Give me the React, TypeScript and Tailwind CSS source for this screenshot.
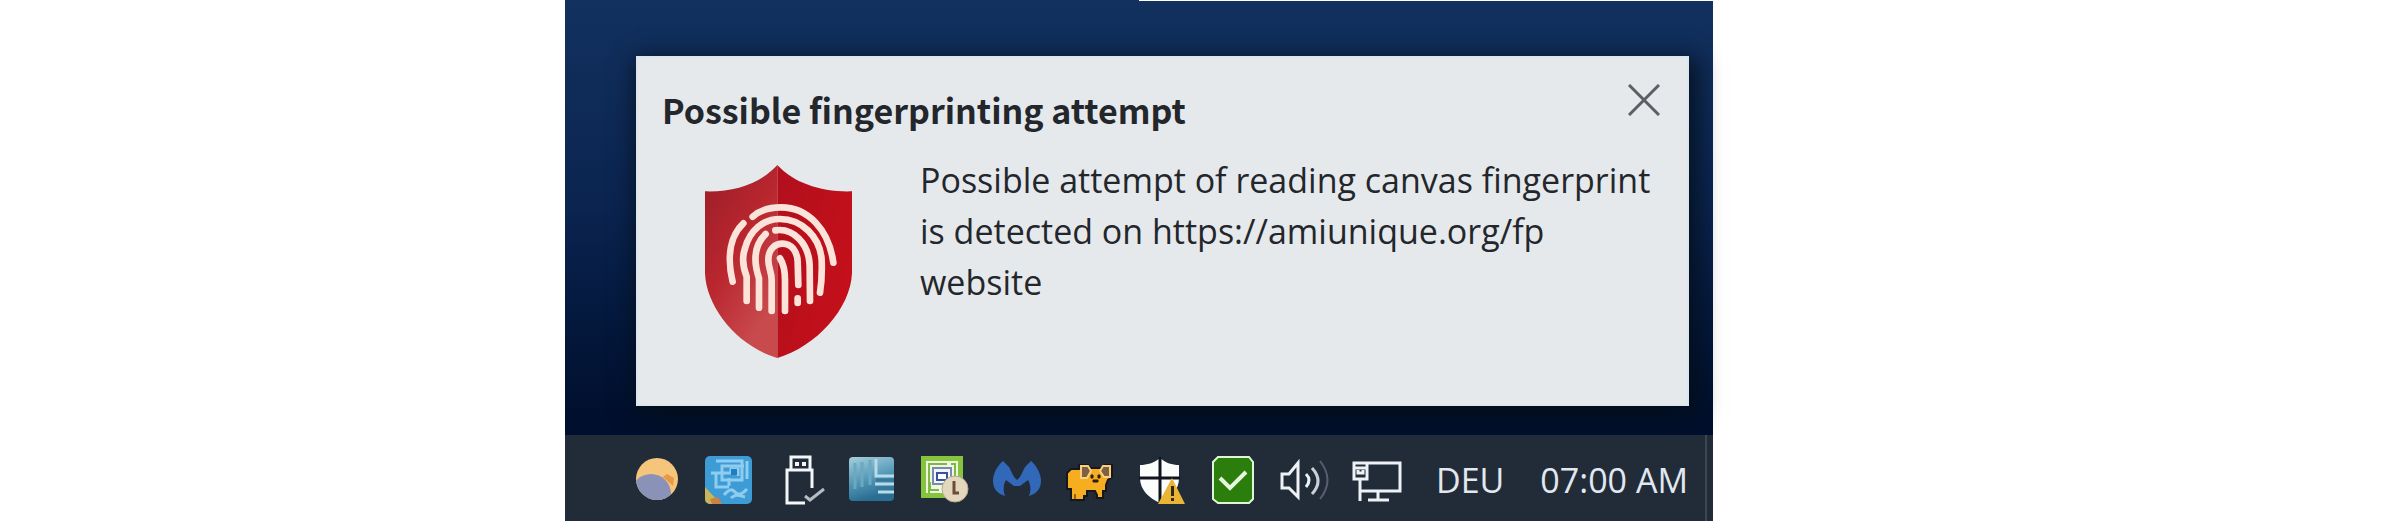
import React, { useState } from 'react';

const ShieldLogo: React.FC = () => (
  <svg viewBox="0 0 441 579" className="w-[147px] h-[193px] shrink-0" role="img" aria-label="Fingerprint shield">
    <defs>
      <linearGradient id="shield-left" x1="0" y1="0.2" x2="0.5" y2="1">
        <stop offset="0" stopColor="#a3202a" />
        <stop offset="0.45" stopColor="#b9262e" />
        <stop offset="1" stopColor="#c84a4d" />
      </linearGradient>
      <linearGradient id="shield-right" x1="0" y1="0" x2="1" y2="0.6">
        <stop offset="0" stopColor="#b10f1d" />
        <stop offset="1" stopColor="#c4101a" />
      </linearGradient>
    </defs>
    <path d="M217 0C168 54 90 82 0 79V325C4 430 100 545 217 579Z" fill="url(#shield-left)" />
    <path d="M217 0C266 54 350 82 441 79V325C437 430 334 545 217 579Z" fill="url(#shield-right)" />
    <g fill="none" stroke="#fbe3da" strokeWidth="20" strokeLinecap="round">
      <path d="M143 155C165 135 200 127 228 127C310 127 372 195 385 293" />
      <path d="M115 175C78 210 64 270 83 350" />
      <path d="M125 408V335C114 308 110 280 120 250C135 195 175 162 225 162C290 162 345 215 350 285Q352 340 345 383" />
      <path d="M162 428V340C148 298 143 245 182 207" />
      <path d="M211 196C265 188 311 235 314 300L315 408" />
      <path d="M200 438V345C200 320 190 310 190 285C190 252 210 236 233 236C260 236 277 260 278 290L280 360" />
      <path d="M278 400V414" />
      <path d="M225 280C238 300 240 320 240 345V438" />
    </g>
  </svg>
);

const trayIcons = [
  {
    label: 'Redshift',
    art: (
      <>
        <clipPath id="sun-clip">
          <circle cx="25" cy="23" r="21" />
        </clipPath>
        <g clipPath="url(#sun-clip)">
          <rect width="48" height="48" fill="#f5c57c" />
          <path d="M31 21l4-3 7 4-1 8z" fill="#e79a45" />
          <circle cx="19" cy="38" r="20" fill="#8a92b8" />
        </g>
      </>
    ),
  },
  {
    label: 'Screen tool',
    art: (
      <>
        <rect x="1" y="0" width="47" height="48" rx="5" fill="#3d9bd6" />
        <path d="M1 31l16 17H6a5 5 0 0 1-5-5z" fill="#c9b55a" />
        <path d="M6 43l8-2 4 7H8z" fill="#c98345" />
        <g fill="none" stroke="#8fcdef" strokeWidth="3">
          <path d="M12 5h26v19H18V10h22" />
          <path d="M7 17h20v-4h7v7M12 17v14h13M25 30v-8" />
          <path d="M20 39c4-5 8-7 11-3s8 2 12-3M27 42c5-5 9-2 14-1M43 5v18" />
        </g>
        <path d="M27 13h6v6h-6z" fill="#1f7fc0" />
      </>
    ),
  },
  {
    label: 'USB',
    art: (
      <>
        <g fill="none" stroke="#f4f6f8" strokeWidth="3">
          <path d="M15 14V1H34v13M36 32V14H11v33h18" />
          <path d="M29 40l5 4L48 33" stroke="#b4bbc3" />
        </g>
        <path d="M19 6h4v4h-4zM26 6h4v4h-4z" fill="#f4f6f8" />
      </>
    ),
  },
  {
    label: 'Monitor layout',
    art: (
      <>
        <defs>
          <linearGradient id="teal" x1="0" y1="0" x2="0.3" y2="1">
            <stop offset="0" stopColor="#a5cfdd" />
            <stop offset="0.6" stopColor="#5095b4" />
            <stop offset="1" stopColor="#2a6d92" />
          </linearGradient>
        </defs>
        <rect x="1" y="1" width="45" height="44" rx="4" fill="url(#teal)" />
        <path d="M7 33V7M14 31V6M22 29V4" stroke="#6ba8c1" strokeWidth="3" />
        <path d="M28 3v17h18M30 36h16M27 28h19" fill="none" stroke="#b7dce8" strokeWidth="3" />
        <path d="M28 24h18M28 32h18" stroke="#35799b" strokeWidth="3" />
      </>
    ),
  },
  {
    label: 'Snippet scheduler',
    art: (
      <>
        <rect x="1" y="0" width="42" height="42" fill="#85c43c" />
        <path d="M6 5h32v32H6z" fill="#eef7e0" />
        <path d="M9 37V8h18M31 8h4v18M10 26v8h9" fill="none" stroke="#7fb845" strokeWidth="2" />
        <path d="M13 12h18v16H13z" fill="#f3f5fb" stroke="#7c89b5" strokeWidth="2" />
        <path d="M17 17h10v7H17z" fill="#fff" stroke="#35549b" strokeWidth="2" />
        <circle cx="35" cy="33" r="13" fill="#e3d8bd" stroke="#b5aa90" strokeWidth="1" />
        <path d="M34 25v12h5" fill="none" stroke="#6d4a3c" strokeWidth="3" />
      </>
    ),
  },
  {
    label: 'Malwarebytes',
    art: (
      <path
        d="M11 5C5 10 1 18 1 25C1 33 6 38 13 40C11 34 11 29 14 24L22 30H28L36 24C39 29 39 35 37 40C44 38 49 33 49 25C49 18 45 10 39 5L33 11L28 21L25 24L22 21L17 11Z"
        fill="#3268b9"
      />
    ),
  },
  {
    label: 'Amule',
    art: (
      <>
        <path
          d="M3 17l4-4h8V9h9l3 3h11l3-3h7v12l-4 3-2 5v6h-3v7h-6v-3l-2-4h-8v5h-3v4H7V33H3z"
          fill="#f6ad20"
          stroke="#15171b"
          strokeWidth="2"
        />
        <path d="M17 10h7l3 5-4 7h-6zM46 10h-7l-3 5 4 6h6z" fill="#7d6140" stroke="#f9cf80" strokeWidth="2" />
        <path d="M27 19h2v3h-2zM34 19h2v3h-2zM29 24h5v2h-5zM11 38v6M30 38v5" fill="#2a1e0c" stroke="#2a1e0c" strokeWidth="1" />
      </>
    ),
  },
  {
    label: 'Windows Security',
    art: (
      <>
        <path d="M24 2C18 7 11 9 4 9V22C4 34 13 42 24 47C35 42 43 34 43 22V9C36 9 30 7 24 2Z" fill="#fbfcfc" />
        <path d="M24 1v46M3 22h41" stroke="#10151c" strokeWidth="3" />
        <path d="M36 22L49 48H22Z" fill="#eab535" />
        <path d="M35 30h3v10h-3zM35 42h3v3h-3z" fill="#33280f" />
      </>
    ),
  },
  {
    label: 'Status OK',
    art: (
      <>
        <path d="M10 1h31l4 5v37l-4 4H10l-5-4V6z" fill="#2b7d0c" stroke="#dff5d7" strokeWidth="2" />
        <path d="M12 22l10 10L38 16" fill="none" stroke="#e6f9df" strokeWidth="4" />
      </>
    ),
  },
  {
    label: 'Volume',
    art: (
      <g fill="none" stroke="#eef1f5" strokeWidth="3">
        <path d="M2 18h7l9-11v34L9 32H2z" />
        <path d="M26 18q6 6 0 13" />
        <path d="M32 12q12 13 0 26" stroke="#c9d0d8" />
        <path d="M40 5q15 19 0 38" stroke="#55606c" strokeWidth="2" />
      </g>
    ),
  },
  {
    label: 'Network',
    art: (
      <g fill="none" stroke="#eef1f5" strokeWidth="3">
        <path d="M15 7h33v28H9M2 7h13v16H2zM8 23v22M2 12h12M6 14v3h5v-3" />
        <path d="M26 35v8M16 44h21" />
      </g>
    ),
  },
];

const App: React.FC = () => {
  const [open, setOpen] = useState(true);

  return (
    <div className="grid grid-cols-[565fr_1148fr_690fr] bg-white font-['Open_Sans',sans-serif] text-[34px] leading-[51px]">
      <main className="relative col-start-2 bg-linear-to-b from-[#12315f] via-[#0b2450] via-40% to-[#010f2e] to-80%">
        <span className="absolute top-0 right-0 h-px w-1/2 bg-white" />

        <div className="min-h-[435px] pt-14 pr-6 pb-[29px] pl-[71px]">
          {open && (
            <section
              role="alert"
              aria-labelledby="toast-title"
              className="min-h-[350px] border-2 border-[#dce6ec] bg-[#e6e9ec] pt-[26px] pr-[27px] pb-11 pl-6 text-[#23272c] shadow-[4px_6px_22px_4px_rgba(3,14,22,0.85)]"
            >
              <header className="flex items-start justify-between">
                <h1 id="toast-title" className="font-['Noto_Sans_CJK_SC',sans-serif] font-bold">
                  Possible fingerprinting attempt
                </h1>
                <button type="button" aria-label="Close" onClick={() => setOpen(false)}>
                  <svg viewBox="0 0 32 32" className="size-8" fill="none" stroke="#5b5f64" strokeWidth="3">
                    <path d="M1 1L31 31M31 1L1 31" />
                  </svg>
                </button>
              </header>
              <div className="mt-5 flex items-start gap-[68px] pl-[43px]">
                <div className="shrink-0 pt-2.5">
                  <ShieldLogo />
                </div>
                <p>Possible attempt of reading canvas fingerprint is detected on https://amiunique.org/fp website</p>
              </div>
            </section>
          )}
        </div>

        <footer className="flex h-[86px] items-stretch bg-[#222c38] text-[#e3e8f0]">
          <div className="flex items-center gap-9 pt-1 pl-[67px] whitespace-nowrap">
            <nav className="flex items-center gap-6" aria-label="System tray">
              {trayIcons.map(({ label, art }) => (
                <button key={label} type="button" aria-label={label} className="shrink-0">
                  <svg viewBox="0 0 48 48" className="size-12 overflow-visible">{art}</svg>
                </button>
              ))}
            </nav>
            <button type="button">DEU</button>
            <time dateTime="07:00">07:00 AM</time>
          </div>
          <button type="button" aria-label="Show desktop" className="ml-auto w-2 border-l-2 border-[#3c4754]" />
        </footer>
      </main>
    </div>
  );
};

export default App;
